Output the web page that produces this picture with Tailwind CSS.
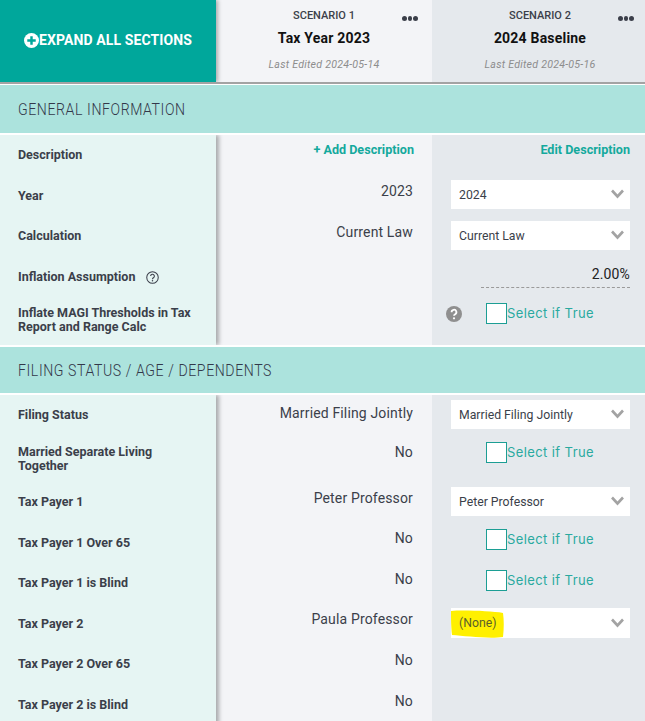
<!DOCTYPE html>
<html lang="en">
<head>
    <meta charset="UTF-8">
    <meta name="viewport" content="width=device-width, initial-scale=1.0">
    <title>Scenario Compare</title>
    <script src="https://cdn.jsdelivr.net/npm/@tailwindcss/browser@4"></script>
</head>
<body class="bg-white h-[721px] w-[645px] overflow-hidden font-['Roboto',sans-serif] text-[#3b3f4a]">

    <!-- Header -->
    <div class="grid grid-cols-[216px_216px_213px] h-[84px] border-b-2 border-[#a3a3a3] overflow-hidden">
        <div class="bg-[#00a79b] flex items-center justify-center text-white font-bold text-[14px] tracking-[0.1px] pb-[1px] shadow-[2px_0_4px_rgba(0,0,0,0.3)] z-10">
            <svg class="w-[15px] h-[15px]" viewBox="0 0 16 16"><circle cx="8" cy="8" r="8" fill="#fff"/><path d="M8 3.5v9M3.5 8h9" stroke="#00a79b" stroke-width="2.6"/></svg>
            <span>EXPAND ALL SECTIONS</span>
        </div>
        <div class="bg-[#f3f4f7] relative flex flex-col items-center pt-[9px]">
            <div class="text-[11px] font-medium leading-[14px]">SCENARIO 1</div>
            <div class="text-[14px] font-bold text-[#111] mt-[5px] leading-[20px] tracking-[0.2px]">Tax Year 2023</div>
            <div class="text-[10.6px] italic text-[#8d8d8d] mt-[10px] leading-[14px] tracking-[0.25px]">Last Edited 2024-05-14</div>
            <div class="absolute top-[16px] left-[186px] flex gap-[1px]">
                <span class="w-[4.5px] h-[4.5px] rounded-full bg-[#3b3f4a]"></span><span class="w-[4.5px] h-[4.5px] rounded-full bg-[#3b3f4a]"></span><span class="w-[4.5px] h-[4.5px] rounded-full bg-[#3b3f4a]"></span>
            </div>
        </div>
        <div class="bg-[#e5e9ed] relative flex flex-col items-center pt-[9px] pl-[3px]">
            <div class="text-[11px] font-medium leading-[14px]">SCENARIO 2</div>
            <div class="text-[14px] font-bold text-[#111] mt-[5px] leading-[20px] tracking-[0.2px]">2024 Baseline</div>
            <div class="text-[10.6px] italic text-[#8d8d8d] mt-[10px] leading-[14px] tracking-[0.25px]">Last Edited 2024-05-16</div>
            <div class="absolute top-[16px] left-[186px] flex gap-[1px]">
                <span class="w-[4.5px] h-[4.5px] rounded-full bg-[#3b3f4a]"></span><span class="w-[4.5px] h-[4.5px] rounded-full bg-[#3b3f4a]"></span><span class="w-[4.5px] h-[4.5px] rounded-full bg-[#3b3f4a]"></span>
            </div>
        </div>
    </div>

    <!-- General information -->
    <div class="mt-[1px] h-[48px] bg-[#ace3dd] flex items-center pl-[18px] pt-[2px] text-[17px] font-light tracking-[0.7px] text-[#33384a]"><span class="origin-left scale-x-[0.83] whitespace-nowrap">GENERAL INFORMATION</span></div>

    <div class="mt-[2px] grid grid-cols-[216px_216px_213px] grid-rows-[40px_41px_40px_41px_48px] text-[12.5px] font-bold overflow-hidden">
        <div class="bg-[#e6f5f3] pl-[18px] flex flex-col shadow-[3px_0_4px_rgba(0,0,0,0.3)] z-10 row-span-5">
            <div class="h-[40px] flex items-center">Description</div>
            <div class="h-[41px] flex items-center pt-[1px]">Year</div>
            <div class="h-[40px] flex items-center">Calculation</div>
            <div class="h-[41px] flex items-center pt-[1px] gap-[11px]">Inflation Assumption
                <svg class="w-[13px] h-[13px]" viewBox="0 0 14 14" fill="none" stroke="#3b3f4a"><circle cx="7" cy="7" r="6.2" stroke-width="1.1"/><path d="M5 5.5a2 2 0 1 1 3 1.7c-.7.4-1 .8-1 1.6" stroke-width="1.2"/><circle cx="7" cy="10.6" r=".8" fill="#3b3f4a" stroke="none"/></svg>
            </div>
            <div class="h-[48px] flex items-center pb-[2px] leading-[14px]">Inflate MAGI Thresholds in Tax<br>Report and Range Calc</div>
        </div>

        <div class="bg-[#f3f4f7] text-right pr-[18px] pt-[7px] font-bold text-[#14a99d] text-[12.6px] leading-[16px]">+ Add Description</div>
        <div class="bg-[#e5e9ed] text-right pr-[15px] pt-[7px] font-bold text-[#14a99d] text-[12.6px] leading-[16px] row-start-1 col-start-3">Edit Description</div>

        <div class="bg-[#f3f4f7] col-start-2 text-right pr-[19px] pt-[8px] text-[14px] font-normal tracking-[0.15px] leading-[16px]">2023</div>
        <div class="bg-[#e5e9ed] col-start-3 pl-[19px] pr-[15px] pt-[5px]">
            <div class="relative bg-white h-[29px]">
                <select class="w-full h-full appearance-none bg-transparent pl-[8px] pt-[2px] text-[12.25px] font-normal outline-none"><option>2024</option></select>
                <svg class="absolute right-[6px] top-[9px] w-[13px] h-[10px] pointer-events-none" viewBox="0 0 13 10" fill="none" stroke="#a3a3a3" stroke-width="2.6"><path d="M1 1.5l5.5 6 5.5-6"/></svg>
            </div>
        </div>

        <div class="bg-[#f3f4f7] col-start-2 text-right pr-[19px] pt-[8px] text-[14px] font-normal tracking-[0.15px] leading-[16px]">Current Law</div>
        <div class="bg-[#e5e9ed] col-start-3 pl-[19px] pr-[15px] pt-[5px]">
            <div class="relative bg-white h-[29px]">
                <select class="w-full h-full appearance-none bg-transparent pl-[8px] pt-[2px] text-[12.25px] font-normal outline-none"><option>Current Law</option></select>
                <svg class="absolute right-[6px] top-[9px] w-[13px] h-[10px] pointer-events-none" viewBox="0 0 13 10" fill="none" stroke="#a3a3a3" stroke-width="2.6"><path d="M1 1.5l5.5 6 5.5-6"/></svg>
            </div>
        </div>

        <div class="bg-[#f3f4f7] col-start-2"></div>
        <div class="bg-[#e5e9ed] col-start-3 pl-[49px] pr-[15px] pt-[10px]">
            <div class="border-b border-dashed border-[#9a9a9a] h-[22px] text-right text-[14px] font-normal text-[#222] leading-[17px] tracking-[0.15px]">2.00%</div>
        </div>

        <div class="bg-[#f3f4f7] col-start-2"></div>
        <div class="bg-[#e5e9ed] col-start-3 flex items-start pt-[6px] pl-[14px]">
            <svg class="w-[16px] h-[16px] mt-[3px] mr-[24px]" viewBox="0 0 16 16"><circle cx="8" cy="8" r="8" fill="#8f8f8f"/><path d="M5.6 6.2a2.4 2.4 0 1 1 3.6 2c-.8.5-1.2.9-1.2 1.6" fill="none" stroke="#fff" stroke-width="1.8"/><circle cx="8" cy="12.3" r="1.1" fill="#fff"/></svg>
            <span class="w-[21px] h-[21px] bg-white border-[1.5px] border-[#1c9e94]"></span>
            <span class="font-['Inter',sans-serif] text-[13px] font-normal text-[#2aa9a0] tracking-[0.4px] leading-[21px]">Select if True</span>
        </div>
    </div>

    <!-- Filing status -->
    <div class="mt-[2px] h-[46px] bg-[#ace3dd] flex items-center pl-[18px] pt-[1px] text-[17px] font-light tracking-[0.7px] text-[#33384a]"><span class="origin-left scale-x-[0.83] whitespace-nowrap">FILING STATUS / AGE / DEPENDENTS</span></div>

    <div class="mt-[2px] grid grid-cols-[216px_216px_213px] text-[12.5px] font-bold overflow-hidden">
        <div class="bg-[#e6f5f3] pl-[18px] flex flex-col shadow-[3px_0_4px_rgba(0,0,0,0.3)] z-10 row-span-8">
            <div class="h-[40px] flex items-center">Filing Status</div>
            <div class="h-[47px] flex items-center leading-[14px]">Married Separate Living<br>Together</div>
            <div class="h-[40px] flex items-center">Tax Payer 1</div>
            <div class="h-[41px] flex items-center pt-[1px]">Tax Payer 1 Over 65</div>
            <div class="h-[40px] flex items-center">Tax Payer 1 is Blind</div>
            <div class="h-[40px] flex items-center pt-[2px]">Tax Payer 2</div>
            <div class="h-[41px] flex items-center pt-[1px]">Tax Payer 2 Over 65</div>
            <div class="h-[41px] flex items-center pt-[1px]">Tax Payer 2 is Blind</div>
        </div>

        <div class="h-[40px] bg-[#f3f4f7] text-right pr-[19px] pt-[10px] text-[14px] font-normal tracking-[0.15px] leading-[16px]">Married Filing Jointly</div>
        <div class="bg-[#e5e9ed] pl-[19px] pr-[15px] pt-[5px]">
            <div class="relative bg-white h-[29px]">
                <select class="w-full h-full appearance-none bg-transparent pl-[8px] pt-[2px] text-[12.25px] font-normal outline-none"><option>Married Filing Jointly</option></select>
                <svg class="absolute right-[6px] top-[9px] w-[13px] h-[10px] pointer-events-none" viewBox="0 0 13 10" fill="none" stroke="#a3a3a3" stroke-width="2.6"><path d="M1 1.5l5.5 6 5.5-6"/></svg>
            </div>
        </div>

        <div class="h-[47px] col-start-2 bg-[#f3f4f7] text-right pr-[19px] pt-[9px] text-[14px] font-normal tracking-[0.15px] leading-[16px]">No</div>
        <div class="bg-[#e5e9ed] flex items-start pt-[7px] pl-[54px]">
            <span class="w-[21px] h-[21px] bg-white border-[1.5px] border-[#1c9e94]"></span>
            <span class="font-['Inter',sans-serif] text-[13px] font-normal text-[#2aa9a0] tracking-[0.4px] leading-[21px]">Select if True</span>
        </div>

        <div class="h-[40px] col-start-2 bg-[#f3f4f7] text-right pr-[19px] pt-[8px] text-[14px] font-normal tracking-[0.15px] leading-[16px]">Peter Professor</div>
        <div class="bg-[#e5e9ed] pl-[19px] pr-[15px] pt-[5px]">
            <div class="relative bg-white h-[29px]">
                <select class="w-full h-full appearance-none bg-transparent pl-[8px] pt-[2px] text-[12.25px] font-normal outline-none"><option>Peter Professor</option></select>
                <svg class="absolute right-[6px] top-[9px] w-[13px] h-[10px] pointer-events-none" viewBox="0 0 13 10" fill="none" stroke="#a3a3a3" stroke-width="2.6"><path d="M1 1.5l5.5 6 5.5-6"/></svg>
            </div>
        </div>

        <div class="h-[41px] col-start-2 bg-[#f3f4f7] text-right pr-[19px] pt-[8px] text-[14px] font-normal tracking-[0.15px] leading-[16px]">No</div>
        <div class="bg-[#e5e9ed] flex items-start pt-[7px] pl-[54px]">
            <span class="w-[21px] h-[21px] bg-white border-[1.5px] border-[#1c9e94]"></span>
            <span class="font-['Inter',sans-serif] text-[13px] font-normal text-[#2aa9a0] tracking-[0.4px] leading-[21px]">Select if True</span>
        </div>

        <div class="h-[40px] col-start-2 bg-[#f3f4f7] text-right pr-[19px] pt-[8px] text-[14px] font-normal tracking-[0.15px] leading-[16px]">No</div>
        <div class="bg-[#e5e9ed] flex items-start pt-[7px] pl-[54px]">
            <span class="w-[21px] h-[21px] bg-white border-[1.5px] border-[#1c9e94]"></span>
            <span class="font-['Inter',sans-serif] text-[13px] font-normal text-[#2aa9a0] tracking-[0.4px] leading-[21px]">Select if True</span>
        </div>

        <div class="h-[40px] col-start-2 bg-[#f3f4f7] text-right pr-[19px] pt-[8px] text-[14px] font-normal tracking-[0.15px] leading-[16px]">Paula Professor</div>
        <div class="bg-[#e5e9ed] pl-[19px] pr-[15px] pt-[5px]">
            <div class="relative bg-white h-[30px]">
                <svg class="absolute left-0 top-0 w-[53px] h-[30px]" viewBox="0 0 53 30"><path d="M0 3C12 2 40 3 52 5 53 12 53 20 52 29 38 31 14 28 1 27 0 18 0 9 0 3Z" fill="#fff000"/></svg>
                <select class="relative w-full h-full appearance-none bg-transparent pl-[8px] text-[12.25px] font-normal text-[#5b5f2a] outline-none"><option>(None)</option></select>
                <svg class="absolute right-[6px] top-[10px] w-[13px] h-[10px] pointer-events-none" viewBox="0 0 13 10" fill="none" stroke="#a3a3a3" stroke-width="2.6"><path d="M1 1.5l5.5 6 5.5-6"/></svg>
            </div>
        </div>

        <div class="h-[41px] col-start-2 bg-[#f3f4f7] text-right pr-[19px] pt-[9px] text-[14px] font-normal tracking-[0.15px] leading-[16px]">No</div>
        <div class="bg-[#e5e9ed]"></div>

        <div class="h-[41px] col-start-2 bg-[#f3f4f7] text-right pr-[19px] pt-[9px] text-[14px] font-normal tracking-[0.15px] leading-[16px]">No</div>
        <div class="bg-[#e5e9ed]"></div>
    </div>
</body>
</html>
